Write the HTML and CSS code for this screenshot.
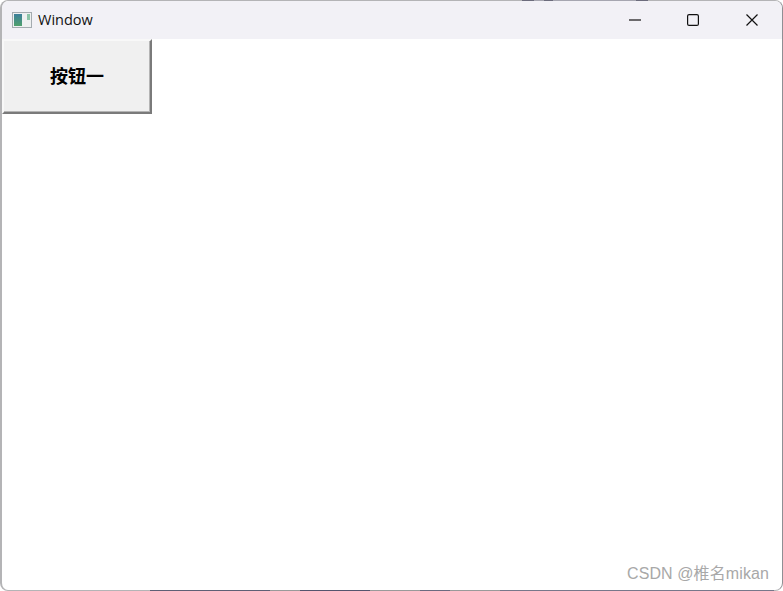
FILE: index.html
```html
<!DOCTYPE html>
<html lang="en">
<head>
  <meta charset="UTF-8">
  <meta name="viewport" content="width=device-width, initial-scale=1.0">
  <title>Window</title>
  <link rel="stylesheet" href="styles.css">
</head>
<body>

  <div class="window">
    <div class="titlebar">
      <svg class="app-icon" width="20" height="16" viewBox="0 0 20 16">
        <defs>
          <linearGradient id="appFill" x1="0" y1="0" x2="0" y2="1">
            <stop offset="0" stop-color="#3d7f9c"/>
            <stop offset="1" stop-color="#4fa06c"/>
          </linearGradient>
        </defs>
        <rect x="0.5" y="0.5" width="19" height="15" fill="#eef0f1" stroke="#a4abb0"/>
        <rect x="2" y="2" width="8" height="12" fill="url(#appFill)"/>
        <rect x="15" y="2" width="3" height="6" fill="#8cc4a8"/>
      </svg>
      <span class="title">Window</span>
      <div class="controls">
        <div class="control">
          <svg width="12" height="12" viewBox="0 0 12 12"><path d="M0 6H12" stroke="#111" stroke-width="1.2" fill="none"/></svg>
        </div>
        <div class="control">
          <svg width="12" height="12" viewBox="0 0 12 12"><rect x="0.6" y="0.6" width="10.8" height="10.8" rx="1.5" stroke="#111" stroke-width="1.2" fill="none"/></svg>
        </div>
        <div class="control">
          <svg width="12" height="12" viewBox="0 0 12 12"><path d="M0.5 0.5L11.5 11.5M11.5 0.5L0.5 11.5" stroke="#111" stroke-width="1.2" fill="none"/></svg>
        </div>
      </div>
    </div>
    <div class="content">
      <button class="push-button">按钮一</button>
      <span class="watermark">CSDN @椎名mikan</span>
    </div>
  </div>

</body>
</html>
```

FILE: styles.css
```css
html, body {
  height: 100%;
}
body {
  margin: 0;
  background-color: #fff;
  font-family: "Noto Sans", "Noto Sans CJK SC", sans-serif;
  overflow: hidden;
}
.window {
  box-sizing: border-box;
  height: 591px;
  display: flex;
  flex-direction: column;
  background-color: #fff;
  border: 1px solid #b4b4b6;
  border-left-width: 2px;
  border-right-color: #8f8f94;
  border-radius: 8px;
  position: relative;
}
/* bits of the desktop showing along the bottom and top edges */
.window::before {
  content: "";
  position: absolute;
  left: 148px;
  right: 8px;
  bottom: -1px;
  height: 1px;
  background: linear-gradient(to right, #5f5f75 0 120px, #9a9a9a 120px 150px, #55556e 150px 220px, #9a9a9a 220px 270px, #6b6b80 270px 300px, #9a9a9a 300px 350px, #77778a 350px 100%);
}
.window::after {
  content: "";
  position: absolute;
  left: 520px;
  width: 126px;
  top: -1px;
  height: 1px;
  background: linear-gradient(to right, #6c6c7c 0 12px, #a6a6b0 12px 22px, #6c6c7c 22px 31px, #a6a6b0 31px 114px, #6c6c7c 114px 100%);
}
.titlebar {
  height: 38px;
  flex: none;
  display: flex;
  align-items: center;
  padding-left: 10px;
  background-color: #f2f1f6;
  border-radius: 7px 7px 0 0;
}
.app-icon {
  margin-right: 6px;
}
.title {
  font-family: "Open Sans", "Noto Sans", sans-serif;
  font-size: 14.5px;
  color: #111;
  margin-top: -2px;
}
.controls {
  display: flex;
  margin-left: auto;
  margin-right: 1px;
}
.control {
  width: 58.5px;
  height: 38px;
  display: flex;
  align-items: center;
  justify-content: center;
}
.content {
  flex: 1;
  position: relative;
}
.push-button {
  display: block;
  box-sizing: border-box;
  width: 150px;
  height: 75px;
  padding: 0 0 4px;
  background-color: #f0f0f0;
  border: 2px solid;
  border-color: #f8f8f8 #7a7a7a #7a7a7a #f8f8f8;
  box-shadow: inset -1px -1px 0 #b4b4b4;
  font-family: "Noto Sans CJK SC", sans-serif;
  font-size: 18px;
  font-weight: bold;
  color: #000;
}
.watermark {
  position: absolute;
  right: 13px;
  bottom: 6px;
  font-family: "Liberation Sans", "Noto Sans CJK SC", sans-serif;
  font-size: 16px;
  letter-spacing: 0.1px;
  color: #a8a8a8;
}
```
